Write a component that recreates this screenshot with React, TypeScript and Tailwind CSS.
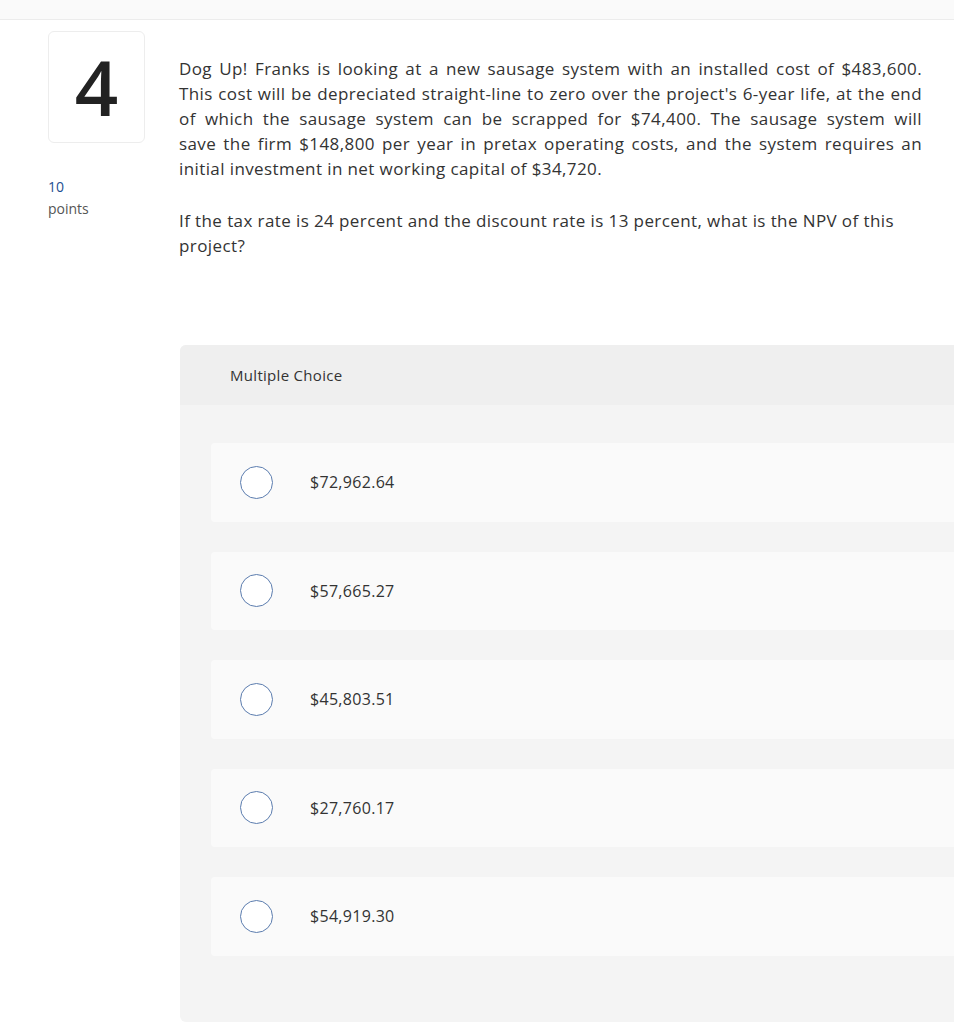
const choices = ["$72,962.64", "$57,665.27", "$45,803.51", "$27,760.17", "$54,919.30"];

const intro = [
  "Dog Up! Franks is looking at a new sausage system with an installed cost of $483,600.",
  "This cost will be depreciated straight-line to zero over the project's 6-year life, at the end",
  "of which the sausage system can be scrapped for $74,400. The sausage system will",
  "save the firm $148,800 per year in pretax operating costs, and the system requires an",
];

function Radio() {
  return <span className="block w-[33px] h-[33px] rounded-full border-[1.5px] border-[#5b7cae] bg-white shrink-0" />;
}

export default function App() {
  return (
    <div className="w-[954px] h-[1024px] overflow-hidden bg-white text-[#333] font-['Open_Sans',sans-serif]">
      <div className="h-[20px] bg-[#fafafa] border-b border-[#ececec]" />

      <div className="flex pt-[11px]">
        {/* left column */}
        <div className="w-[131px] pl-[48px] shrink-0">
          <div className="w-[97px] h-[112px] rounded-[6px] border border-[#ededed] flex items-center justify-center text-[76px] leading-none font-semibold text-[#222]">
            4
          </div>
          <div className="mt-[33px] text-[14px] leading-[22px] text-[#1d4f91]">10</div>
          <div className="text-[14px] leading-[22px] text-[#555]">points</div>
        </div>

        {/* question */}
        <div className="flex-1 pl-[48px] min-w-0">
          <div className="pr-[32px] pt-[25px] text-[17px] leading-[25px] tracking-[0.4px]">
            <p>
              {intro.map((l) => (
                <span key={l} className="block text-justify [text-align-last:justify] whitespace-nowrap">
                  {l}
                </span>
              ))}
              <span className="block">initial investment in net working capital of $34,720.</span>
            </p>
            <p className="mt-[27px]">
              <span className="block">If the tax rate is 24 percent and the discount rate is 13 percent, what is the NPV of this</span>
              <span className="block">project?</span>
            </p>
          </div>

          <div className="mt-[87px] ml-[1px] w-[800px] rounded-l-[6px] bg-[#f4f4f4] overflow-hidden">
            <div className="h-[60px] bg-[#efefef] flex items-center pl-[50px] text-[15px] tracking-[0.3px]">Multiple Choice</div>
            <div className="pt-[38px] pb-[66px] pl-[31px] flex flex-col gap-[30px]">
              {choices.map((c) => (
                <div key={c} className="h-[78.5px] bg-[#fafafa] rounded-l-[4px] flex items-center pl-[29px]">
                  <Radio />
                  <span className="ml-[37px] text-[16px] tracking-[0.3px]">{c}</span>
                </div>
              ))}
            </div>
          </div>
        </div>
      </div>
    </div>
  );
}
